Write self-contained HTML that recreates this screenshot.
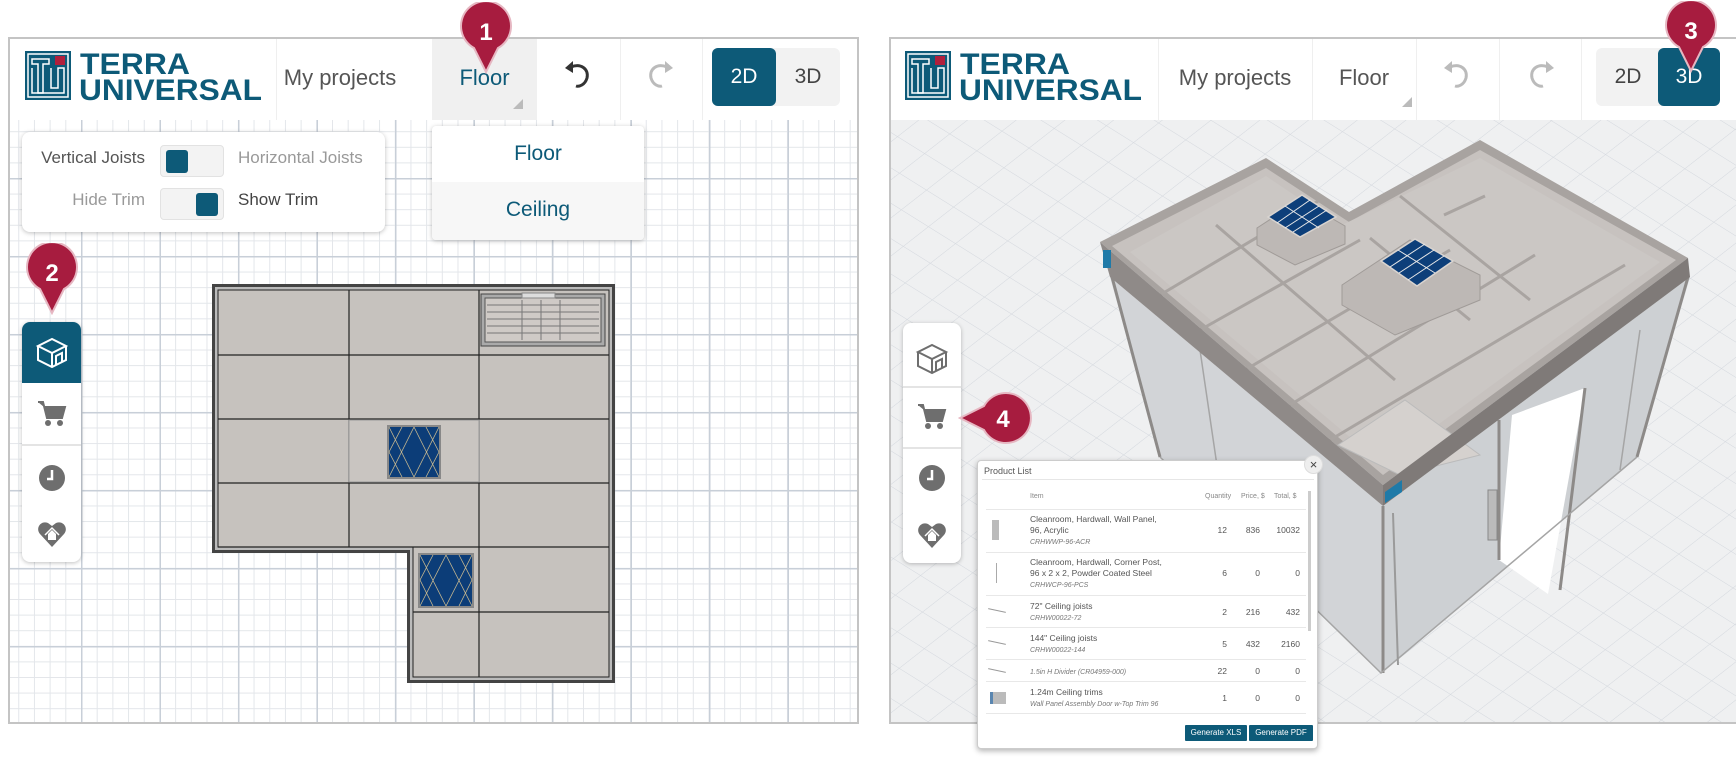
<!DOCTYPE html>
<html><head><meta charset="utf-8"><style>
*{box-sizing:border-box;margin:0;padding:0}
body{width:1736px;height:759px;background:#fff;position:relative;overflow:hidden;font-family:"Liberation Sans",sans-serif}
.abs{position:absolute}
.panel{position:absolute;border:2px solid #c4c4c4}
.hdr{position:absolute;background:#fff;height:81px;z-index:3}
.grid{position:absolute;background-color:#fff;
background-image:linear-gradient(to right,#c8cfd8 1.5px,transparent 1.5px),linear-gradient(to bottom,#c8cfd8 1.5px,transparent 1.5px),linear-gradient(to right,#e3e6ea 1px,transparent 1px),linear-gradient(to bottom,#e3e6ea 1px,transparent 1px);
background-size:78.5px 78px,78.5px 78px,15.7px 15.6px,15.7px 15.6px;
background-position:71px 0,0 60px,71px 0,0 60px}
.vd{position:absolute;top:0;width:1px;height:81px;background:#efefef}
.ht{position:absolute;font-size:22px;color:#555;top:26px}
.tog{position:absolute;height:58px;width:128px;background:#f2f2f2;border-radius:6px}
.tb{position:absolute;top:0;height:58px;width:64px;border-radius:6px;font-size:21px;text-align:center;line-height:58px;color:#444}
.on{background:#0d5a78;color:#fff}
.card{position:absolute;background:#fff;border-radius:8px;box-shadow:0 1px 5px rgba(0,0,0,.25);z-index:4}
.lbl{position:absolute;font-size:17px}
.sw{position:absolute;width:64px;height:32px;background:#f3f3f3;border:1px solid #e2e2e2;border-radius:4px}
.kn{position:absolute;top:4px;width:22px;height:23px;background:#0d5a78;border-radius:3px}
.sb{position:absolute;background:#fff;border-radius:8px;box-shadow:0 1px 4px rgba(0,0,0,.25);z-index:4;overflow:hidden}
.badge{position:absolute;z-index:6}
.pl{position:absolute;z-index:7;background:#fff;border:1px solid #ccc;box-shadow:0 2px 6px rgba(0,0,0,.3);border-radius:4px;left:977px;top:460px;width:341px;height:289px;font-size:8.5px;color:#555}
.pl .r{position:absolute;left:8px;width:320px;border-bottom:1px solid #e8e8e8}
.pl .t{position:absolute;white-space:nowrap}
.pl i{font-size:7px;color:#777}
.btn{position:absolute;top:264px;height:16px;background:#0d5a78;color:#fff;font-size:8px;text-align:center;line-height:16px;border-radius:1px}
</style></head><body>

<!-- LEFT PANEL -->
<div class="panel" style="left:8px;top:37px;width:851px;height:687px"></div>
<div class="grid" style="left:10px;top:118px;width:847px;height:604px"></div>
<div class="hdr" style="left:10px;top:39px;width:847px">
  <svg class="abs" style="left:14px;top:11px" width="240" height="52" viewBox="0 0 240 52">
    <rect x="1" y="1" width="46" height="49" fill="#0d5a78"/>
    <rect x="4" y="4" width="40" height="43" fill="none" stroke="#fff" stroke-width="1.5"/>
    <path d="M8 9 H25 V14 H19 V43 H14 V14 H8Z" fill="none" stroke="#fff" stroke-width="1.5"/>
    <path d="M8 18 V43 H40 V18 H34 V38 H27 V18" fill="none" stroke="#fff" stroke-width="1.5"/>
    <rect x="31" y="6" width="10" height="9" fill="#b01f3c"/>
    <text x="56" y="24" font-family="Liberation Sans" font-weight="bold" font-size="30" fill="#0d5a78" textLength="110" lengthAdjust="spacingAndGlyphs">TERRA</text>
    <text x="55" y="50" font-family="Liberation Sans" font-weight="bold" font-size="30" fill="#0d5a78" textLength="183" lengthAdjust="spacingAndGlyphs">UNIVERSAL</text>
  </svg>
  <div class="vd" style="left:266px"></div>
  <div class="ht" style="left:248px;width:164px;text-align:center">My projects</div>
  <div class="abs" style="left:422px;top:0;width:105px;height:81px;background:#f0f0f0"></div>
  <div class="ht" style="left:422px;width:105px;text-align:center;color:#0d5a78">Floor</div>
  <svg class="abs" style="left:503px;top:60px" width="10" height="10"><path d="M10 0 V10 H0Z" fill="#bbb"/></svg>
  <div class="vd" style="left:610px"></div>
  <svg class="abs" style="left:553px;top:20px" width="30" height="34" viewBox="0 0 30 34"><path d="M8 8 C18 4 26 10 24 19 C22 26 16 28 13 27" fill="none" stroke="#333" stroke-width="3"/><path d="M2 9 L10 2 L10 14Z" fill="#333"/></svg>
  <svg class="abs" style="left:635px;top:20px" width="30" height="34" viewBox="0 0 30 34"><path d="M22 8 C12 4 4 10 6 19 C8 26 14 28 17 27" fill="none" stroke="#bbb" stroke-width="3"/><path d="M28 9 L20 2 L20 14Z" fill="#bbb"/></svg>
  <div class="vd" style="left:692px"></div>
  <div class="tog" style="left:702px;top:9px"><div class="tb on" style="left:0">2D</div><div class="tb" style="left:64px">3D</div></div>
</div>

<!-- options card -->
<div class="card" style="left:22px;top:132px;width:363px;height:100px">
  <div class="lbl" style="right:240px;top:16px;color:#555">Vertical Joists</div>
  <div class="sw" style="left:138px;top:13px"><div class="kn" style="left:5px"></div></div>
  <div class="lbl" style="left:216px;top:16px;color:#999">Horizontal Joists</div>
  <div class="lbl" style="right:240px;top:58px;color:#999">Hide Trim</div>
  <div class="sw" style="left:138px;top:56px"><div class="kn" style="left:35px"></div></div>
  <div class="lbl" style="left:216px;top:58px;color:#444">Show Trim</div>
</div>
<!-- dropdown -->
<div class="card" style="left:432px;top:126px;width:212px;height:114px;border-radius:4px;overflow:hidden">
  <div class="abs" style="left:0;top:0;width:212px;height:56px;line-height:56px;text-align:center;font-size:21px;color:#0d5a78">Floor</div>
  <div class="abs" style="left:0;top:56px;width:212px;height:58px;line-height:56px;text-align:center;font-size:21px;color:#0d5a78;background:#f7f7f7">Ceiling</div>
</div>

<!-- left sidebar -->
<div class="sb" style="left:22px;top:322px;width:59px;height:240px">
  <div class="abs" style="left:0;top:0;width:59px;height:61px;background:#0d5a78"></div>
  <svg class="abs" style="left:13px;top:13px" width="34" height="34" viewBox="0 0 34 34" fill="none" stroke="#fff" stroke-width="2"><path d="M3 11 L17 4 L31 11 L17 18Z M3 11 V25 L17 32 L31 25 V11 M17 18 V32 M21 30 V21 L27 18 V27"/></svg>
  <svg class="abs" style="left:15px;top:78px" width="30" height="28" viewBox="0 0 30 28"><path d="M1 2 H6 L10 18 H25 L28 7 H7" fill="#6e6e6e" stroke="#6e6e6e" stroke-width="2"/><circle cx="11" cy="23" r="3" fill="#6e6e6e"/><circle cx="23" cy="23" r="3" fill="#6e6e6e"/></svg>
  <div class="abs" style="left:0;top:122px;width:59px;height:2px;background:#e4e4e4"></div>
  <svg class="abs" style="left:16px;top:142px" width="28" height="28"><circle cx="14" cy="14" r="13" fill="#6e6e6e"/><path d="M14 6 V15 H9" stroke="#fff" stroke-width="2.5" fill="none"/></svg>
  <svg class="abs" style="left:15px;top:198px" width="30" height="28" viewBox="0 0 30 28"><path d="M15 27 L3 14 C-2 8 4 0 11 3 L15 6 L19 3 C26 0 32 8 27 14Z" fill="#6e6e6e"/><path d="M8 15 L15 8 L22 15" stroke="#fff" stroke-width="1.5" fill="none"/><path d="M11 14 V20 H19 V14 L15 10Z" fill="#fff"/></svg>
</div>

<!-- floor plan -->
<svg class="abs" style="left:0;top:0;z-index:2" width="860" height="740">
  <path d="M212 284 H615 V683 H407 V553 H212Z" fill="#444"/>
  <path d="M215 287 H612 V680 H410 V550 H215Z" fill="#bbb"/>
  <path d="M218 290 H609 V677 H413 V547 H218Z" fill="#c6c2be" stroke="#222" stroke-width="1"/>
  <g stroke="#222" stroke-width="1.2">
    <path d="M349 290 V547 M479 290 V677 M218 355 H609 M218 419 H609 M218 483 H609 M218 547 H609 M413 612 H609"/>
  </g>
  <rect x="349" y="420" width="130" height="62" fill="#c9c5c1" stroke="#999"/>
  <rect x="481" y="294" width="124" height="52" fill="#aaa" stroke="#444"/>
  <rect x="485" y="298" width="116" height="44" fill="#cfcac6" stroke="#555"/>
  <g stroke="#777" stroke-width="1"><path d="M487 305 H599 M487 312 H599 M487 319 H599 M487 326 H599 M487 333 H599 M522 300 V340 M541 300 V340 M560 300 V340"/></g>
  <rect x="522" y="293" width="33" height="5" fill="#ddd" stroke="#888"/>
  <rect x="387" y="425" width="54" height="54" fill="#888"/>
  <rect x="389" y="427" width="50" height="50" fill="#0c3d78"/>
  <g stroke="#c9b98f" stroke-width="0.8" fill="none"><path d="M389 427 L414 477 M414 427 L389 477 M414 427 L439 477 M439 427 L414 477 M389 452 L402 427 M389 452 L402 477 M439 452 L426 427 M439 452 L426 477"/></g>
  <rect x="418" y="553" width="56" height="55" fill="#888"/>
  <rect x="420" y="555" width="52" height="51" fill="#0c3d78"/>
  <g stroke="#c9b98f" stroke-width="0.8" fill="none"><path d="M420 555 L446 606 M446 555 L420 606 M446 555 L472 606 M472 555 L446 606 M420 580 L433 555 M420 580 L433 606 M472 580 L459 555 M472 580 L459 606"/></g>
</svg>

<!-- RIGHT PANEL -->
<div class="panel" style="left:889px;top:37px;width:847px;height:687px;border-right:none"></div>
<svg class="abs" style="left:0;top:0;z-index:2" width="1736" height="759">
  <defs>
    <pattern id="pa" width="30" height="30" patternUnits="userSpaceOnUse" patternTransform="rotate(32)"><path d="M0 0 H30" stroke="#d4d8de" stroke-width="1"/></pattern>
    <pattern id="pb" width="30" height="30" patternUnits="userSpaceOnUse" patternTransform="rotate(-38)"><path d="M0 0 H30" stroke="#d4d8de" stroke-width="1"/></pattern>
    <clipPath id="cp"><rect x="891" y="118" width="845" height="604"/></clipPath>
  </defs>
  <g clip-path="url(#cp)">
    <rect x="891" y="118" width="845" height="604" fill="#eff0f1"/>
    <rect x="891" y="118" width="845" height="604" fill="url(#pa)"/>
    <rect x="891" y="118" width="845" height="604" fill="url(#pb)"/>
    <path d="M1110 277 L1383 506 L1381 673 L1160 457Z" fill="#d2d4d7"/>
    <path d="M1383 506 L1690 277 L1637 457 L1381 673Z" fill="#cdd0d3"/>
    <path d="M1512 415 L1585 388 L1548 594 L1499 560Z" fill="#fff"/>
    <g stroke="#8d8a88" stroke-width="3" fill="none">
      <path d="M1383 506 V673 M1112 277 L1160 457 M1688 277 L1637 457 M1499 420 L1499 560 M1585 388 L1560 590"/>
    </g>
    <g stroke="#a5a5a5" stroke-width="1.5" fill="none"><path d="M1160 457 L1381 673 L1637 457 M1200 350 L1225 520 M1640 330 L1620 470"/></g>
    <path d="M1393 513 L1398 665" stroke="#9a9a9a" stroke-width="2"/>
    <rect x="1488" y="490" width="9" height="50" fill="#bbb" stroke="#888"/>
    <path d="M1100 242 L1266 158 L1349 212 L1480 140 L1688 258 L1383 485Z" fill="#a8a3a0"/>
    <path d="M1112 246 L1266 168 L1349 222 L1480 150 L1676 260 L1383 475Z" fill="#c7c2bf"/>
    <path d="M1130 252 L1266 176 L1340 226 L1480 158 L1660 262 L1383 465Z" fill="#cbc7c4"/>
    <g stroke="#a9a4a1" stroke-width="3" fill="none">
      <path d="M1160 295 L1320 200 M1200 330 L1360 240 M1245 370 L1450 250 M1290 405 L1535 255 M1330 440 L1625 265 M1216 225 L1395 380 M1400 196 L1530 300 M1370 238 L1470 320 M1485 196 L1444 215"/>
    </g>
    <path d="M1338 445 L1405 400 L1480 455 L1400 475Z" fill="#d5d1ce" stroke="#bbb"/>
    <path d="M1257 228 L1300 200 L1345 226 L1345 244 L1295 265 L1257 245Z" fill="#bdb8b5" stroke="#a09b98"/>
    <path d="M1268 217 L1302 195 L1336 217 L1300 237Z" fill="#0d3f7a" stroke="#d9d4d0" stroke-width="1.5"/>
    <g stroke="#e8e8e8" stroke-width="1" fill="none"><path d="M1285 206 L1319 228 M1319 206 L1285 228 M1277 223 L1310 200 M1293 232 L1327 210"/></g>
    <path d="M1342 285 L1410 240 L1480 275 L1480 300 L1395 335 L1342 305Z" fill="#bdb8b5" stroke="#a09b98"/>
    <path d="M1381 261 L1415 239 L1453 261 L1417 286Z" fill="#0d3f7a" stroke="#d9d4d0" stroke-width="1.5"/>
    <g stroke="#e8e8e8" stroke-width="1" fill="none"><path d="M1398 250 L1435 273 M1434 250 L1399 273 M1390 267 L1425 244 M1408 280 L1444 256"/></g>
    <path d="M1100 242 L1383 485 L1383 506 L1110 277Z" fill="#8f8a88"/>
    <path d="M1383 485 L1688 258 L1690 277 L1383 506Z" fill="#7f7a78"/>
    <rect x="1103" y="250" width="8" height="18" fill="#1f7aa8"/>
    <path d="M1385 492 L1402 480 L1402 492 L1385 503Z" fill="#1f7aa8"/>
  </g>
</svg>
<div class="hdr" style="left:891px;top:39px;width:845px">
  <svg class="abs" style="left:13px;top:11px" width="240" height="52" viewBox="0 0 240 52">
    <rect x="1" y="1" width="46" height="49" fill="#0d5a78"/>
    <rect x="4" y="4" width="40" height="43" fill="none" stroke="#fff" stroke-width="1.5"/>
    <path d="M8 9 H25 V14 H19 V43 H14 V14 H8Z" fill="none" stroke="#fff" stroke-width="1.5"/>
    <path d="M8 18 V43 H40 V18 H34 V38 H27 V18" fill="none" stroke="#fff" stroke-width="1.5"/>
    <rect x="31" y="6" width="10" height="9" fill="#b01f3c"/>
    <text x="56" y="24" font-family="Liberation Sans" font-weight="bold" font-size="30" fill="#0d5a78" textLength="110" lengthAdjust="spacingAndGlyphs">TERRA</text>
    <text x="55" y="50" font-family="Liberation Sans" font-weight="bold" font-size="30" fill="#0d5a78" textLength="183" lengthAdjust="spacingAndGlyphs">UNIVERSAL</text>
  </svg>
  <div class="vd" style="left:267px"></div>
  <div class="ht" style="left:267px;width:154px;text-align:center">My projects</div>
  <div class="vd" style="left:421px"></div>
  <div class="ht" style="left:421px;width:104px;text-align:center">Floor</div>
  <svg class="abs" style="left:511px;top:58px" width="10" height="10"><path d="M10 0 V10 H0Z" fill="#bbb"/></svg>
  <div class="vd" style="left:525px"></div>
  <svg class="abs" style="left:551px;top:20px" width="30" height="34" viewBox="0 0 30 34"><path d="M8 8 C18 4 26 10 24 19 C22 26 16 28 13 27" fill="none" stroke="#bbb" stroke-width="3"/><path d="M2 9 L10 2 L10 14Z" fill="#bbb"/></svg>
  <div class="vd" style="left:608px"></div>
  <svg class="abs" style="left:635px;top:20px" width="30" height="34" viewBox="0 0 30 34"><path d="M22 8 C12 4 4 10 6 19 C8 26 14 28 17 27" fill="none" stroke="#bbb" stroke-width="3"/><path d="M28 9 L20 2 L20 14Z" fill="#bbb"/></svg>
  <div class="vd" style="left:690px"></div>
  <div class="tog" style="left:705px;top:9px;width:124px"><div class="tb" style="left:0">2D</div><div class="tb on" style="left:62px;width:62px">3D</div></div>
</div>

<!-- right sidebar -->
<div class="sb" style="left:903px;top:323px;width:58px;height:240px">
  <svg class="abs" style="left:12px;top:18px" width="34" height="34" viewBox="0 0 34 34" fill="none" stroke="#6e6e6e" stroke-width="2"><path d="M3 11 L17 4 L31 11 L17 18Z M3 11 V25 L17 32 L31 25 V11 M17 18 V32 M21 30 V21 L27 18 V27"/></svg>
  <div class="abs" style="left:0;top:63px;width:58px;height:2px;background:#e4e4e4"></div>
  <svg class="abs" style="left:14px;top:80px" width="30" height="28" viewBox="0 0 30 28"><path d="M1 2 H6 L10 18 H25 L28 7 H7" fill="#6e6e6e" stroke="#6e6e6e" stroke-width="2"/><circle cx="11" cy="23" r="3" fill="#6e6e6e"/><circle cx="23" cy="23" r="3" fill="#6e6e6e"/></svg>
  <div class="abs" style="left:0;top:124px;width:58px;height:2px;background:#e4e4e4"></div>
  <svg class="abs" style="left:15px;top:141px" width="28" height="28"><circle cx="14" cy="14" r="13" fill="#6e6e6e"/><path d="M14 6 V15 H9" stroke="#fff" stroke-width="2.5" fill="none"/></svg>
  <svg class="abs" style="left:14px;top:198px" width="30" height="28" viewBox="0 0 30 28"><path d="M15 27 L3 14 C-2 8 4 0 11 3 L15 6 L19 3 C26 0 32 8 27 14Z" fill="#6e6e6e"/><path d="M8 15 L15 8 L22 15" stroke="#fff" stroke-width="1.5" fill="none"/><path d="M11 14 V20 H19 V14 L15 10Z" fill="#fff"/></svg>
</div>

<!-- badges -->
<svg class="badge" style="left:458px;top:2px" width="56" height="72" viewBox="0 0 56 72"><path d="M28 70 L16 46 A25 25 0 1 1 40 46Z" fill="#a71c3f" stroke="#e6b7c2" stroke-width="2"/><text x="28" y="38" text-anchor="middle" font-family="Liberation Sans" font-weight="bold" font-size="24" fill="#fff">1</text></svg>
<svg class="badge" style="left:24px;top:243px" width="56" height="72" viewBox="0 0 56 72"><path d="M28 70 L16 46 A25 25 0 1 1 40 46Z" fill="#a71c3f" stroke="#e6b7c2" stroke-width="2"/><text x="28" y="38" text-anchor="middle" font-family="Liberation Sans" font-weight="bold" font-size="24" fill="#fff">2</text></svg>
<svg class="badge" style="left:1663px;top:1px" width="56" height="72" viewBox="0 0 56 72"><path d="M28 70 L16 46 A25 25 0 1 1 40 46Z" fill="#a71c3f" stroke="#e6b7c2" stroke-width="2"/><text x="28" y="38" text-anchor="middle" font-family="Liberation Sans" font-weight="bold" font-size="24" fill="#fff">3</text></svg>
<svg class="badge" style="left:958px;top:390px" width="78" height="56" viewBox="0 0 78 56"><path d="M2 28 L26 16 A25 25 0 1 1 26 40Z" fill="#a71c3f" stroke="#e6b7c2" stroke-width="2"/><text x="45" y="37" text-anchor="middle" font-family="Liberation Sans" font-weight="bold" font-size="24" fill="#fff">4</text></svg>

<!-- product list -->
<div class="pl">
  <div class="t" style="left:6px;top:5px;font-size:9px">Product List</div>
  <div class="abs" style="left:4px;top:18px;width:332px;height:1px;background:#e6e6e6"></div>
  <div class="abs" style="right:-6px;top:-6px;width:19px;height:19px;border-radius:50%;background:#eee;border:1px solid #ddd;text-align:center;line-height:17px;font-size:13px;color:#444">×</div>
  <div class="abs" style="left:330px;top:30px;width:3px;height:140px;background:#ccc"></div>
  <div class="r" style="top:24px;height:25px"><span class="t" style="left:44px;top:8px;font-size:7px;color:#888">Item</span><span class="t" style="left:219px;top:8px;font-size:7px;color:#888">Quantity</span><span class="t" style="left:255px;top:8px;font-size:7px;color:#888">Price, $</span><span class="t" style="left:288px;top:8px;font-size:7px;color:#888">Total, $</span></div>
  <div class="r" style="top:49px;height:43px">
    <div class="abs" style="left:6px;top:10px;width:7px;height:20px;background:#bbb"></div>
    <span class="t" style="left:44px;top:4px;line-height:11px">Cleanroom, Hardwall, Wall Panel,<br>96, Acrylic<br><i>CRHWWP-96-ACR</i></span>
    <span class="t" style="right:79px;top:15px">12</span><span class="t" style="right:46px;top:15px">836</span><span class="t" style="right:6px;top:15px">10032</span></div>
  <div class="r" style="top:92px;height:43px">
    <div class="abs" style="left:10px;top:10px;width:1px;height:20px;background:#aaa"></div>
    <span class="t" style="left:44px;top:4px;line-height:11px">Cleanroom, Hardwall, Corner Post,<br>96 x 2 x 2, Powder Coated Steel<br><i>CRHWCP-96-PCS</i></span>
    <span class="t" style="right:79px;top:15px">6</span><span class="t" style="right:46px;top:15px">0</span><span class="t" style="right:6px;top:15px">0</span></div>
  <div class="r" style="top:135px;height:32px">
    <div class="abs" style="left:2px;top:14px;width:18px;height:1px;background:#999;transform:rotate(12deg)"></div>
    <span class="t" style="left:44px;top:5px;line-height:11px">72" Ceiling joists<br><i>CRHW00022-72</i></span>
    <span class="t" style="right:79px;top:11px">2</span><span class="t" style="right:46px;top:11px">216</span><span class="t" style="right:6px;top:11px">432</span></div>
  <div class="r" style="top:167px;height:32px">
    <div class="abs" style="left:2px;top:14px;width:18px;height:1px;background:#999;transform:rotate(12deg)"></div>
    <span class="t" style="left:44px;top:5px;line-height:11px">144" Ceiling joists<br><i>CRHW00022-144</i></span>
    <span class="t" style="right:79px;top:11px">5</span><span class="t" style="right:46px;top:11px">432</span><span class="t" style="right:6px;top:11px">2160</span></div>
  <div class="r" style="top:199px;height:22px">
    <div class="abs" style="left:2px;top:10px;width:18px;height:1px;background:#999;transform:rotate(12deg)"></div>
    <span class="t" style="left:44px;top:6px"><i>1.5in H Divider (CR04959-000)</i></span>
    <span class="t" style="right:79px;top:6px">22</span><span class="t" style="right:46px;top:6px">0</span><span class="t" style="right:6px;top:6px">0</span></div>
  <div class="r" style="top:221px;height:32px">
    <div class="abs" style="left:4px;top:10px;width:16px;height:12px;background:#bbb;border-left:3px solid #5a86b0"></div>
    <span class="t" style="left:44px;top:5px;line-height:11px">1.24m Ceiling trims<br><i>Wall Panel Assembly Door w-Top Trim 96</i></span>
    <span class="t" style="right:79px;top:11px">1</span><span class="t" style="right:46px;top:11px">0</span><span class="t" style="right:6px;top:11px">0</span></div>
  <div class="btn" style="left:207px;width:62px">Generate XLS</div>
  <div class="btn" style="left:271px;width:64px">Generate PDF</div>
</div>
</body></html>
